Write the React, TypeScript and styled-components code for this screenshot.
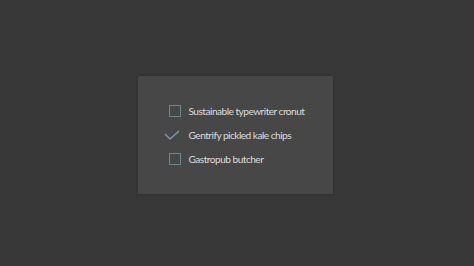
import React from 'react';
import styled, { createGlobalStyle } from 'styled-components';

const GlobalStyle = createGlobalStyle`
  html, body {
    margin: 0;
    padding: 0;
    background: #383838;
  }
  body {
    font-family: "Lato", "Liberation Sans", sans-serif;
  }
`;

const Page = styled.div`
  width: 474px;
  height: 266px;
  display: flex;
  align-items: center;
  justify-content: center;
  padding: 3px 4px 0 0;
  box-sizing: border-box;
`;

const Panel = styled.div`
  width: 195px;
  height: 118px;
  box-sizing: border-box;
  background: #474747;
  box-shadow: 0 0 3px rgba(0, 0, 0, 0.25);
  padding: 28px 0 0 31px;
  display: flex;
  flex-direction: column;
  gap: 10px;
`;

const Row = styled.label`
  display: flex;
  align-items: center;
  gap: 8px;
  height: 14px;
  font-size: 10.2px;
  letter-spacing: -0.55px;
  color: #dcdcdc;
  cursor: pointer;
`;

const Box = styled.span<{ $checked?: boolean }>`
  width: 12px;
  height: 12px;
  box-sizing: border-box;
  border: ${({ $checked }) => ($checked ? 'none' : '1px solid #6b8a90')};
  display: flex;
  align-items: center;
  justify-content: center;
`;

const items = [
  { label: 'Sustainable typewriter cronut', checked: false },
  { label: 'Gentrify pickled kale chips', checked: true },
  { label: 'Gastropub butcher', checked: false },
];

const Check = () => (
  <svg width="14" height="14" viewBox="0 0 14 14" style={{ overflow: 'visible' }}>
    <path d="M-3 6 L2 11 L11 3" fill="none" stroke="#7ea3b6" strokeWidth="1.2" />
  </svg>
);

export default function App() {
  return (
    <>
      <GlobalStyle />
      <Page>
        <Panel>
          {items.map((item) => (
            <Row key={item.label}>
              <Box $checked={item.checked}>{item.checked && <Check />}</Box>
              {item.label}
            </Row>
          ))}
        </Panel>
      </Page>
    </>
  );
}
